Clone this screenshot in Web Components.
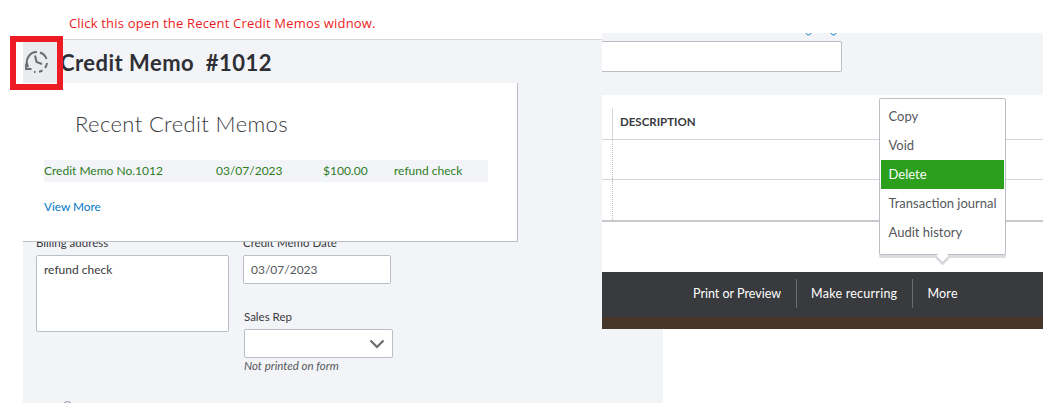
<!DOCTYPE html>
<html>
<head>
<meta charset="utf-8">
<style>
  html, body { margin: 0; background: #fff; }
  body { width: 1051px; height: 409px; overflow: hidden; font-family: Lato, "Noto Sans", sans-serif; color: #393a3d; }
</style>
</head>
<body>
<cm-stage>
  <cm-memo-sheet slot="left">
    <cm-recent-popup slot="popup"></cm-recent-popup>
  </cm-memo-sheet>
  <cm-invoice-sheet slot="right"></cm-invoice-sheet>
  <cm-callout slot="note">Click this open the Recent Credit Memos widnow.</cm-callout>
</cm-stage>

<script>
/* Collage of pasted screenshots: the stage is a free canvas, everything inside the pieces flows */

class CmStage extends HTMLElement {
  constructor() {
    super();
    this.attachShadow({ mode: 'open' }).innerHTML = `
      <style>
        :host { display: block; position: relative; width: 1051px; height: 409px; overflow: hidden; }
        .left { position: absolute; left: 23px; top: 39px; }
        .right { position: absolute; left: 602px; top: 33px; }
        .note { position: absolute; left: 69px; top: 14px; }
        .mark { position: absolute; left: 10px; top: 36px; width: 53px; height: 54px; box-sizing: border-box; border: 6px solid #ed1c24; }
      </style>
      <div class="left"><slot name="left"></slot></div>
      <div class="right"><slot name="right"></slot></div>
      <div class="note"><slot name="note"></slot></div>
      <div class="mark"></div>
    `;
  }
}
customElements.define('cm-stage', CmStage);

class CmCallout extends HTMLElement {
  constructor() {
    super();
    this.attachShadow({ mode: 'open' }).innerHTML = `
      <style>
        :host { display: block; font: 13px/18px "Open Sans", sans-serif; color: #ed1c24; white-space: nowrap; letter-spacing: .18px; }
      </style>
      <slot></slot>
    `;
  }
}
customElements.define('cm-callout', CmCallout);

class CmMemoSheet extends HTMLElement {
  constructor() {
    super();
    this.attachShadow({ mode: 'open' }).innerHTML = `
      <style>
        :host { display: block; position: relative; width: 640px; height: 364px; box-sizing: border-box; background: #f3f4f8; border-top: 1px solid #d4d7dc; overflow: hidden; }
        header { display: flex; align-items: center; height: 43px; }
        .recent { display: flex; align-items: center; justify-content: center; width: 35px; height: 43px; background: #e9ebef; padding-right: 9px; box-sizing: border-box; }
        h1 { margin: 2px 0 0 2px; font: 700 22px/30px Lato, sans-serif; color: #2f3035; white-space: pre; letter-spacing: .47px; }
        .form { display: grid; grid-template-columns: 193px 150px; column-gap: 14px; padding: 153px 0 0 13px; }
        label { display: block; font: 11.5px/14px Lato, sans-serif; color: #393a3d; margin-bottom: 5px; }
        .box { box-sizing: border-box; background: #fff; border: 1px solid #babec5; border-radius: 2px; font: 12px/16px Lato, sans-serif; color: #393a3d; }
        .addr { height: 77px; padding: 6px 7px; }
        .date { width: 148px; height: 29px; padding: 6px 7px; color: #55575c; }
        .rep { margin: 26px 0 0 1px; }
        .select { width: 149px; height: 29px; display: flex; align-items: center; justify-content: flex-end; padding-right: 7px; }
        .hint { font: italic 11.5px/14px Lato, sans-serif; color: #55575c; margin-top: 1px; }
        .dot { position: absolute; left: 40px; top: 361px; width: 9px; height: 9px; box-sizing: border-box; border: 1.5px solid #8d9096; border-radius: 50%; }
      </style>
      <header>
        <div class="recent">
          <svg width="26" height="26" viewBox="0 0 26 26" fill="none" stroke="#6b6c72" stroke-width="2">
            <path d="M5.2 18A10 10 0 0 1 14 3"/>
            <path d="M17 3.500A10 10 0 0 1 23.500 10M24 14A10 10 0 0 1 22 19M19.500 21.300A10 10 0 0 1 16 22.800M12.500 22.900h-1.500"/>
            <path d="M12 6.500l1.600 6.500 5.400 2"/>
            <path d="M3 14.500V20h5.500" stroke-width="1.800"/>
          </svg>
        </div>
        <h1>Credit Memo  #1012</h1>
      </header>
      <div class="form">
        <div>
          <label>Billing address</label>
          <div class="box addr">refund check</div>
        </div>
        <div>
          <label>Credit Memo Date</label>
          <div class="box date">03/07/2023</div>
          <div class="rep">
            <label>Sales Rep</label>
            <div class="box select">
              <svg width="16" height="10" viewBox="0 0 16 10" fill="none" stroke="#6b6c72" stroke-width="2.200"><path d="M1.500 1.500L8 8l6.500-6.500"/></svg>
            </div>
            <div class="hint">Not printed on form</div>
          </div>
        </div>
      </div>
      <span class="dot"></span>
      <slot name="popup"></slot>
    `;
  }
}
customElements.define('cm-memo-sheet', CmMemoSheet);

class CmRecentPopup extends HTMLElement {
  constructor() {
    super();
    this.attachShadow({ mode: 'open' }).innerHTML = `
      <style>
        :host { display: block; position: absolute; left: 0; top: 43px; width: 495px; height: 159px; box-sizing: border-box; background: #fff; border-right: 1px solid #babec5; border-bottom: 1px solid #babec5; padding: 25px 29px 0 21px; }
        h2 { margin: 0 0 0 31px; font: 300 22px/32px Lato, sans-serif; color: #393a3d; letter-spacing: .39px; }
        .row { display: grid; grid-template-columns: 172px 107px 71px 1fr; align-items: center; height: 22px; margin-top: 20px; background: #f3f4f8; font: 12px/16px Lato, sans-serif; color: #2e7d1f; white-space: nowrap; }
        a { display: block; margin-top: 16px; font: 11.800px/18px Lato, sans-serif; color: #0077c5; text-decoration: none; }
      </style>
      <h2>Recent Credit Memos</h2>
      <div class="row"><span>Credit Memo No.1012</span><span>03/07/2023</span><span>$100.00</span><span>refund check</span></div>
      <a href="#">View More</a>
    `;
  }
}
customElements.define('cm-recent-popup', CmRecentPopup);

class CmInvoiceSheet extends HTMLElement {
  constructor() {
    super();
    this.attachShadow({ mode: 'open' }).innerHTML = `
      <style>
        :host { display: block; position: relative; width: 441px; height: 296px; }
        .top { height: 62px; background: #f3f4f8; box-sizing: border-box; padding-top: 8px; position: relative; }
        .field { width: 240px; height: 31px; box-sizing: border-box; background: #fff; border: 1px solid #babec5; border-left: 0; border-radius: 0 2px 2px 0; }
        .top svg { position: absolute; left: 203px; top: 0; }
        .table { height: 177px; box-sizing: border-box; background: #fff; padding-top: 13px; }
        .grid { height: 112px; border-bottom: 2px solid #c8c9cc; }
        .head { height: 31px; padding-left: 10px; border-bottom: 1px solid #d4d7dc; font: 700 11.500px/28px Lato, sans-serif; color: #393a3d; }
        .head span { display: block; height: 31px; border-left: 1px solid #d4d7dc; padding-left: 7px; }
        .cell { height: 39px; padding-left: 10px; border-bottom: 1px solid #d4d7dc; }
        .cell:last-child { border-bottom: 0; height: 40px; }
        .cell i { display: block; height: 100%; border-left: 1px dotted #babec5; }
        .bar { display: flex; align-items: center; height: 45px; box-sizing: border-box; padding: 0 0 2px 91px; background: #393a3d; color: #fff; font: 12.500px/18px Lato, sans-serif; }
        .bar span { padding: 0 14.500px; white-space: nowrap; }
        .bar span:first-child { padding-left: 0; }
        .bar span + span { border-left: 1px solid #6b6c72; height: 29px; line-height: 29px; letter-spacing: .25px; }
        .earth { height: 12px; background: #47352a; }
      </style>
      <div class="top">
        <svg width="32" height="3" viewBox="0 0 32 3" fill="none" stroke="#0077c5" stroke-width="1"><path d="M1 0c.5 2.500 4 2.500 5 0M26 0c.5 2.500 4 2.500 5 0"/></svg>
        <div class="field"></div>
      </div>
      <div class="table">
        <div class="grid">
          <div class="head"><span>DESCRIPTION</span></div>
          <div class="cell"><i></i></div>
          <div class="cell"><i></i></div>
        </div>
      </div>
      <div class="bar"><span>Print or Preview</span><span>Make recurring</span><span>More</span></div>
      <div class="earth"></div>
      <cm-more-menu></cm-more-menu>
    `;
  }
}
customElements.define('cm-invoice-sheet', CmInvoiceSheet);

class CmMoreMenu extends HTMLElement {
  constructor() {
    super();
    this.attachShadow({ mode: 'open' }).innerHTML = `
      <style>
        :host { display: block; position: absolute; left: 277px; top: 65px; width: 127px; height: 157px; box-sizing: border-box; background: #fff; border: 1px solid #babec5; border-radius: 2px; padding: 3px 1px; box-shadow: 0 3px 0 #dcdde0; font: 13px/29px Lato, sans-serif; color: #55575c; }
        div { height: 29px; padding-left: 7.500px; white-space: nowrap; }
        .on { background: #2ca01c; color: #fff; }
        .tip { position: absolute; left: 56px; bottom: -9px; width: 12px; height: 12px; padding: 0; transform: rotate(45deg) scale(.75); background: #fff; border-right: 1px solid #babec5; border-bottom: 1px solid #babec5; box-shadow: 2px 2px 0 #dcdde0; }
      </style>
      <div>Copy</div>
      <div>Void</div>
      <div class="on">Delete</div>
      <div>Transaction journal</div>
      <div>Audit history</div>
      <div class="tip"></div>
    `;
  }
}
customElements.define('cm-more-menu', CmMoreMenu);
</script>
</body>
</html>
